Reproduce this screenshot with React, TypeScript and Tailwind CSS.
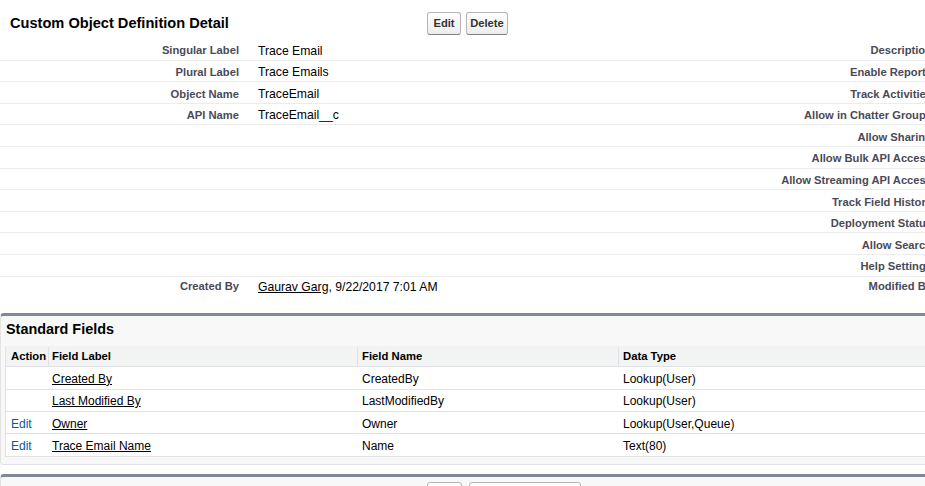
const leftRows: [string, string][] = [
  ["Singular Label", "Trace Email"],
  ["Plural Label", "Trace Emails"],
  ["Object Name", "TraceEmail"],
  ["API Name", "TraceEmail__c"],
  ["", ""],
  ["", ""],
  ["", ""],
  ["", ""],
  ["", ""],
  ["", ""],
  ["", ""],
];

const rightLabels = [
  "Description",
  "Enable Reports",
  "Track Activities",
  "Allow in Chatter Groups",
  "Allow Sharing",
  "Allow Bulk API Access",
  "Allow Streaming API Access",
  "Track Field History",
  "Deployment Status",
  "Allow Search",
  "Help Settings",
];

interface FieldRow {
  edit: boolean;
  label: string;
  name: string;
  type: string;
}

const fields: FieldRow[] = [
  { edit: false, label: "Created By", name: "CreatedBy", type: "Lookup(User)" },
  { edit: false, label: "Last Modified By", name: "LastModifiedBy", type: "Lookup(User)" },
  { edit: true, label: "Owner", name: "Owner", type: "Lookup(User,Queue)" },
  { edit: true, label: "Trace Email Name", name: "Name", type: "Text(80)" },
];

function Btn({ children, className }: { children: React.ReactNode; className: string }) {
  return (
    <button
      className={`h-[23px] rounded-[3px] border border-[#b5b5b5] border-b-[#7f7f7f] bg-linear-to-b from-white to-[#ededed] text-[11.2px] font-bold text-[#333] ${className}`}
    >
      {children}
    </button>
  );
}

function DetailRow({
  label,
  value,
  rightLabel,
  last,
}: {
  label: string;
  value: React.ReactNode;
  rightLabel: string;
  last?: boolean;
}) {
  // last row has no separator and sits its text near the top
  const line = last ? "items-start pt-[1px]" : "items-center pt-[3px] border-b border-[#ececec]";
  return (
    <>
      <div className={`flex h-[21.6px] justify-end pr-[10px] text-[11.2px] font-bold text-[#4a4a56] ${line}`}>
        {label}
      </div>
      <div className={`flex h-[21.6px] pl-[9px] text-[12.2px] text-black ${line}`}>{value}</div>
      <div className={`flex h-[21.6px] justify-end whitespace-nowrap pr-[10px] text-[11.2px] font-bold text-[#4a4a56] ${line}`}>
        {rightLabel}
      </div>
      <div className={`h-[21.6px] ${line}`} />
    </>
  );
}

export default function App() {
  return (
    <div className="h-[486px] w-[925px] overflow-hidden bg-white font-['Liberation_Sans',Arial,sans-serif]">
      <div className="w-[1390px]">
        {/* Detail block */}
        <div className="flex h-[39px] items-center pt-[7px]">
          <h2 className="mt-[2px] w-[427px] pl-[10px] text-[14.6px] font-bold text-black">Custom Object Definition Detail</h2>
          <div className="flex gap-[5px]">
            <Btn className="w-[34px]">Edit</Btn>
            <Btn className="w-[42px]">Delete</Btn>
          </div>
        </div>
        <div className="grid grid-cols-[249px_444px_249px_444px]">
          {leftRows.map(([l, v], i) => (
            <DetailRow key={i} label={l} value={v} rightLabel={rightLabels[i]} />
          ))}
          <DetailRow
            last
            label="Created By"
            rightLabel="Modified By"
            value={
              <span>
                <span className="underline">Gaurav Garg</span>, 9/22/2017 7:01 AM
              </span>
            }
          />
        </div>

        {/* Standard Fields */}
        <div className="mt-[15px] rounded-l-[4px] border-t-[3px] border-b border-l border-[#e3e3e3] border-t-[#7f8998] bg-[#f8f8f8]">
          <div className="h-[30px] pl-[5px] pt-[3px] text-[14.4px] font-bold text-black">Standard Fields</div>
          <div className="pl-[4px]">
            <div className="border-l border-[#e0e3e5]">
              <div className="grid h-[21px] grid-cols-[42px_309px_261px_1fr] border-b border-[#e0e3e5] bg-[#f2f3f3] pt-[1px] text-[11.3px] font-bold text-black">
                <div className="flex items-center pl-[5px]">Action</div>
                <div className="flex items-center border-l border-[#e0e3e5] pl-[3px]">Field Label</div>
                <div className="flex items-center border-l border-[#e0e3e5] pl-[4px]">Field Name</div>
                <div className="flex items-center border-l border-[#e0e3e5] pl-[4px]">Data Type</div>
              </div>
              {fields.map((f) => (
                <div
                  key={f.name}
                  className="grid h-[22.4px] grid-cols-[42px_309px_261px_1fr] border-b border-[#e3e3e3] bg-white pt-[2px] text-[12px] text-black"
                >
                  <div className="flex items-center pl-[5px] text-[#015ba7]">{f.edit ? "Edit" : ""}</div>
                  <div className="flex items-center pl-[4px]">
                    <span className="underline">{f.label}</span>
                  </div>
                  <div className="flex items-center pl-[5px]">{f.name}</div>
                  <div className="flex items-center pl-[5px]">{f.type}</div>
                </div>
              ))}
            </div>
          </div>
          <div className="h-[7px]" />
        </div>

        {/* Next block (cut off) */}
        <div className="mt-[9px] h-[20px] rounded-tl-[4px] border-t-[3px] border-l border-[#e3e3e3] border-t-[#7f8998] bg-[#f8f8f8] pt-[5px]">
          <div className="flex gap-[7px] pl-[426px]">
            <div className="h-[22px] w-[35px] rounded-[3px] border border-[#b5b5b5] bg-white" />
            <div className="h-[22px] w-[112px] rounded-[3px] border border-[#b5b5b5] bg-white" />
          </div>
        </div>
      </div>
    </div>
  );
}
